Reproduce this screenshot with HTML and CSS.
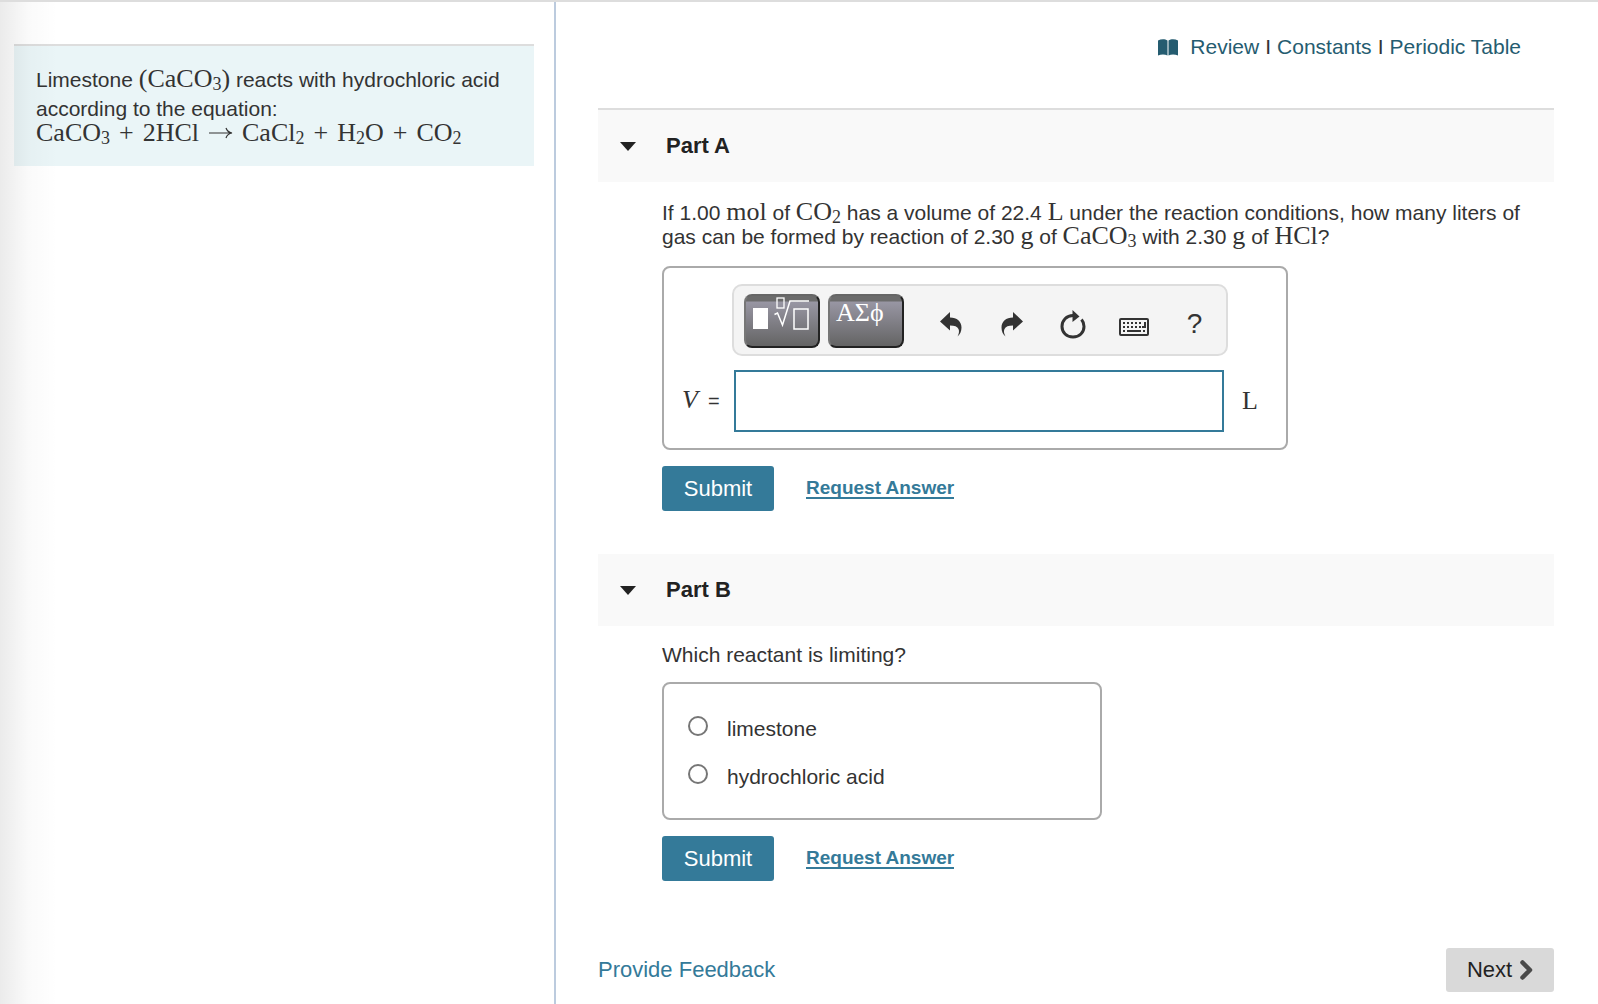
FILE: index.html
```html
<!DOCTYPE html>
<html lang="en">
<head>
    <meta charset="UTF-8">
    <meta name="viewport" content="width=device-width, initial-scale=1.0">
    <title>Limestone and Hydrochloric Acid</title>
    <link rel="stylesheet" href="styles.css">
</head>
<body>
    <div class="page">
        <!-- Problem statement -->
        <aside class="sidebar">
            <div class="intro">
                <p class="intro-text">Limestone <span class="math"><span class="paren">(</span>CaCO<sub>3</sub><span class="paren">)</span></span> reacts with hydrochloric acid according to the equation:</p>
                <div class="math equation">
                    <span>CaCO<sub>3</sub></span>
                    <span>+</span>
                    <span>2HCl</span>
                    <svg width="25" height="14" viewBox="0 0 25 14" fill="none" stroke="#333" stroke-width="1.2"><path d="M1 7h22M18 2c1 3 3 4.500 6 5c-3 .5-5 2-6 5"/></svg>
                    <span>CaCl<sub>2</sub></span>
                    <span>+</span>
                    <span>H<sub>2</sub>O</span>
                    <span>+</span>
                    <span>CO<sub>2</sub></span>
                </div>
            </div>
        </aside>

        <main class="content">
            <nav class="links">
                <svg class="book" width="20" height="17" viewBox="0 0 20 17"><path fill="#255c70" d="M0 1.500C3-.2 7-.2 9.500 1.500V16.500C7 15 3 15 0 16.500zM10.500 1.500C13-.2 17-.2 20 1.500V16.500C17 15 13 15 10.500 16.500z"/></svg>
                <a href="#">Review</a>
                <span>I</span>
                <a href="#">Constants</a>
                <span>I</span>
                <a href="#">Periodic Table</a>
            </nav>

            <!-- Part A -->
            <section class="part">
                <h2 class="part-title part-first"><button type="button" class="toggle"><span class="caret"></span>Part A</button></h2>
                <form class="part-body">
                    <p class="question question-math">If 1.00 <span class="math">mol</span> of <span class="math">CO<sub>2</sub></span> has a volume of 22.4 <span class="math">L</span> under the reaction conditions, how many liters of gas can be formed by reaction of 2.30 <span class="math">g</span> of <span class="math">CaCO<sub>3</sub></span> with 2.30 <span class="math">g</span> of <span class="math">HCl</span>?</p>
                    <div class="answer-box">
                        <div class="toolbar">
                            <button type="button" class="tool-key" aria-label="Templates">
                                <svg width="60" height="34" viewBox="0 0 60 34" fill="none" stroke="#fff">
                                    <rect x="1" y="12" width="15" height="21" fill="#fff" stroke="none"/>
                                    <rect x="25" y="2" width="7" height="10" stroke-width="1.300"/>
                                    <path stroke-width="1.500" d="M22.500 18.500l3-1.500l5 12L38 5h19"/>
                                    <rect x="42" y="13" width="14" height="20" stroke-width="1.500"/>
                                </svg>
                            </button>
                            <button type="button" class="tool-key">ΑΣϕ</button>
                            <button type="button" class="tool" aria-label="Undo">
                                <svg width="22" height="25" viewBox="0 0 22 25"><path fill="#333" d="M0 9.500L10 0v5.500c7 0 11.500 4 11.500 10c0 4-1.500 7-4 9c1.500-3 2-5 1-7.500c-1-2.500-4-3.500-8.500-3.500v5z"/></svg>
                            </button>
                            <button type="button" class="tool" aria-label="Redo">
                                <svg width="22" height="25" viewBox="0 0 22 25"><path fill="#333" d="M22 9.500L12 0v5.500C5 5.500.5 9.500.5 15.500c0 4 1.500 7 4 9c-1.500-3-2-5-1-7.500c1-2.500 4-3.500 8.500-3.500v5z"/></svg>
                            </button>
                            <button type="button" class="tool" aria-label="Reset">
                                <svg width="26" height="29" viewBox="0 0 26 29"><path fill="none" stroke="#333" stroke-width="3" d="M13 5.500C6.500 5.500 2 10.500 2 16.500S6.500 27 13 27s11-4.500 11-10.500c0-3-.8-5-2.500-7"/><path fill="#333" d="M12.500 0l7 6.500l-7 5.500z"/></svg>
                            </button>
                            <button type="button" class="tool" aria-label="Keyboard">
                                <svg class="keyboard" width="30" height="18" viewBox="0 0 30 18" fill="none" stroke="#333" stroke-width="2"><rect x="1" y="1" width="28" height="16" rx="1"/><path stroke-dasharray="2 2" d="M4 5h20M4 9h19"/><path d="M26 4v5h-3M4 13h2M8 13h14M24 13h2"/></svg>
                            </button>
                            <button type="button" class="tool tool-help" aria-label="Help">?</button>
                        </div>
                        <label class="answer-label" for="volume"><i class="math">V</i><span class="equals">=</span></label>
                        <input class="answer-input" type="text" id="volume" name="volume">
                        <span class="math unit">L</span>
                    </div>
                    <div class="actions">
                        <button type="submit" class="submit">Submit</button>
                        <a class="request" href="#">Request Answer</a>
                    </div>
                </form>
            </section>

            <!-- Part B -->
            <section class="part">
                <h2 class="part-title"><button type="button" class="toggle"><span class="caret"></span>Part B</button></h2>
                <form class="part-body">
                    <p class="question">Which reactant is limiting?</p>
                    <div class="choices">
                        <div class="choice">
                            <input type="radio" id="limestone" name="reactant" value="limestone">
                            <label for="limestone">limestone</label>
                        </div>
                        <div class="choice">
                            <input type="radio" id="acid" name="reactant" value="acid">
                            <label for="acid">hydrochloric acid</label>
                        </div>
                    </div>
                    <div class="actions">
                        <button type="submit" class="submit">Submit</button>
                        <a class="request" href="#">Request Answer</a>
                    </div>
                </form>
            </section>

            <footer class="footer">
                <a href="#">Provide Feedback</a>
                <button type="button" class="next">Next
                    <svg width="13" height="20" viewBox="0 0 13 20" fill="none" stroke="#4a4a4a" stroke-width="4.500" stroke-linecap="round" stroke-linejoin="round"><path d="M2.500 2.500L10 10L2.500 17.500"/></svg>
                </button>
            </footer>
        </main>
    </div>
</body>
</html>
```

FILE: styles.css
```css
* {
    box-sizing: border-box;
}

body {
    margin: 0;
    font-family: "Liberation Sans", Arial, Helvetica, sans-serif;
    font-size: 21px;
    line-height: 24px;
    color: #333;
    background-color: #fff;
}

a {
    text-decoration: none;
}

button {
    font-family: inherit;
    cursor: pointer;
}

.page {
    display: flex;
    min-height: 100vh;
    border-top: 2px solid #ddd;
}

/* Left column */
.sidebar {
    position: relative;
    flex: 0 0 556px;
    padding: 42px 20px 0 14px;
    border-right: 2px solid #bccbde;
}

.sidebar::before {
    content: "";
    position: absolute;
    top: 0;
    bottom: 0;
    left: 0;
    width: 58px;
    background: linear-gradient(to right, rgba(0, 0, 0, 0.08), rgba(0, 0, 0, 0.02) 50%, transparent);
    pointer-events: none;
}

.intro {
    padding: 19px 22px 23px;
    background-color: #eaf5f7;
    border-top: 2px solid #ddd;
}

.intro-text {
    margin: 0;
    line-height: 29px;
}

.math {
    font-family: "Liberation Serif", "Times New Roman", serif;
    font-size: 26px;
    line-height: 20px;
}

.math sub {
    font-size: 18px;
    line-height: 0;
    vertical-align: -3px;
}

.paren {
    line-height: 20px;
}

.equation {
    display: flex;
    align-items: center;
    gap: 9px;
    white-space: nowrap;
}

/* Right column */
.content {
    flex: 1;
    min-width: 0;
    padding: 33px 44px 12px 42px;
}

.links {
    display: flex;
    align-items: center;
    justify-content: flex-end;
    gap: 6px;
    padding-right: 33px;
    margin-bottom: 49px;
}

.links a {
    color: #255c70;
}

.book {
    margin-right: 6px;
}

.part {
    padding-bottom: 43px;
}

.part-title {
    margin: 0;
    background-color: #f9f9f9;
}

.part-first {
    border-top: 2px solid #ddd;
}

.toggle {
    display: flex;
    align-items: center;
    width: 100%;
    height: 72px;
    padding: 0 22px;
    gap: 30px;
    border: none;
    background: none;
    font-size: 22px;
    font-weight: bold;
    color: #222;
}

.caret {
    border-top: 9px solid #222;
    border-left: 8px solid transparent;
    border-right: 8px solid transparent;
}

.part-body {
    margin: 0;
    padding-left: 64px;
}

.question {
    margin: 0;
    padding: 17px 24px 15px 0;
}

.question-math {
    padding: 19px 24px 17px 0;
}

.answer-box {
    display: grid;
    grid-template-columns: 52px minmax(0, 490px) auto;
    row-gap: 14px;
    align-items: center;
    width: 626px;
    max-width: 100%;
    padding: 16px 18px;
    border: 2px solid #aaa;
    border-radius: 8px;
}

.toolbar {
    grid-column: 2;
    display: flex;
    align-items: center;
    width: 496px;
    height: 72px;
    margin-left: -2px;
    padding: 2px 0 0 10px;
    border: 2px solid #ddd;
    border-radius: 10px;
    background-color: #f4f4f4;
}

.tool-key {
    display: flex;
    flex: none;
    width: 76px;
    height: 54px;
    margin-right: 8px;
    padding: 0 6px;
    border: 2px solid #222;
    border-top-color: #666;
    border-left-color: #777;
    border-radius: 8px;
    background: linear-gradient(#6b6b6b 5px, #9896a3 6px, #646464);
    color: #fff;
    font-family: "Liberation Serif", serif;
    font-size: 26px;
    line-height: 34px;
}

.tool {
    display: flex;
    align-items: center;
    justify-content: center;
    flex: none;
    width: 61px;
    height: 54px;
    padding: 6px 0 0;
    border: none;
    background: none;
    color: #333;
}

.tool-key + .tool {
    margin-left: 8px;
}

.keyboard {
    margin-top: 6px;
}

.tool-help {
    font-size: 28px;
}

.answer-label {
    grid-column: 1;
    display: flex;
    align-items: baseline;
    gap: 10px;
}

.equals {
    font-size: 20px;
}

.answer-input {
    width: 100%;
    height: 62px;
    padding: 0 12px;
    border: 2px solid #347a99;
    font-size: 24px;
}

.unit {
    padding-left: 18px;
}

.actions {
    display: flex;
    align-items: center;
    gap: 32px;
    margin-top: 16px;
}

.submit {
    width: 112px;
    height: 45px;
    border: none;
    border-radius: 3px;
    background-color: #347a99;
    color: #fff;
    font-size: 22px;
}

.request {
    font-size: 19px;
    font-weight: bold;
    color: #347a99;
    border-bottom: 2px solid #347a99;
    line-height: 19px;
}

.choices {
    display: grid;
    gap: 22px;
    width: 440px;
    max-width: 100%;
    padding: 32px 24px 28px;
    border: 2px solid #aaa;
    border-radius: 8px;
}

.choice {
    display: flex;
    align-items: flex-start;
    gap: 19px;
    line-height: 26px;
}

.choice input {
    appearance: none;
    width: 20px;
    height: 20px;
    margin: 0;
    border: 2px solid #767676;
    border-radius: 50%;
    background-color: #fff;
}

.choice input:checked {
    background-color: #347a99;
}

.footer {
    display: flex;
    align-items: center;
    justify-content: space-between;
    margin-top: 24px;
    font-size: 22px;
}

.footer a {
    color: #347a99;
}

.next {
    display: flex;
    align-items: center;
    justify-content: center;
    gap: 8px;
    width: 108px;
    height: 44px;
    padding: 0;
    border: none;
    border-radius: 3px;
    background-color: #d9d9d9;
    color: #222;
    font-size: 22px;
}
```
